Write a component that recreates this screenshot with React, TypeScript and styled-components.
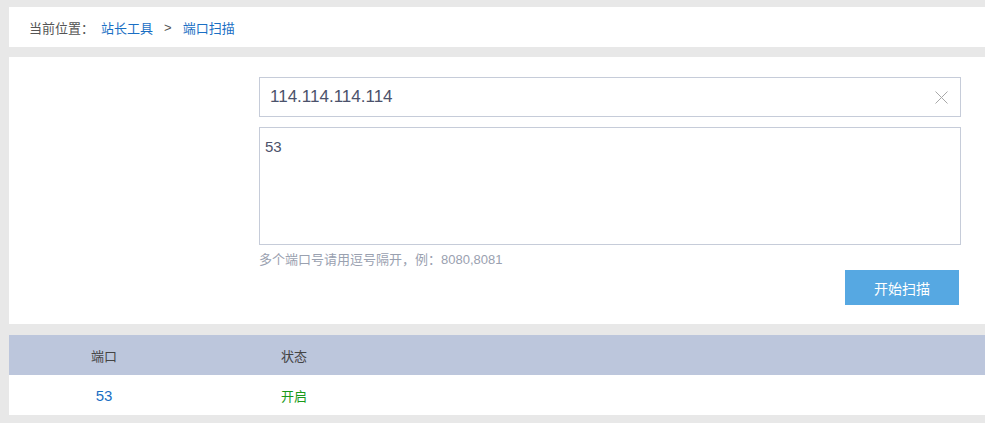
import React from 'react';
import styled, { createGlobalStyle } from 'styled-components';

const GlobalStyle = createGlobalStyle`
  html, body {
    margin: 0;
    padding: 0;
    background-color: #e8e8e8;
    font-family: "Liberation Sans", "Noto Sans CJK SC", Arial, sans-serif;
  }
`;

const Page = styled.div`
  padding: 7px 0 0 9px;
  display: flex;
  flex-direction: column;
  gap: 10px;
`;

const Breadcrumb = styled.div`
  height: 40px;
  background-color: #fff;
  display: flex;
  align-items: center;
  padding-left: 20px;
  font-size: 13px;
  color: #555;
`;

const Crumb = styled.span<{ $gap?: number }>`
  margin-right: ${(p) => p.$gap ?? 0}px;
`;

const Sep = styled.span`
  margin: 0 11px;
`;

const CrumbLink = styled.a`
  color: #1a6fc4;
  text-decoration: none;
`;

const Panel = styled.div`
  background-color: #fff;
  height: 267px;
  box-sizing: border-box;
  padding: 20px 24px 0 250px;
  display: flex;
  flex-direction: column;
`;

const InputBox = styled.div`
  height: 40px;
  box-sizing: border-box;
  border: 1px solid #c6ccd9;
  display: flex;
  align-items: center;
  padding: 0 12px 0 10px;
  font-size: 17px;
  color: #4b526b;
`;

const InputText = styled.span`
  flex: 1;
`;

const TextArea = styled.div`
  margin-top: 10px;
  height: 118px;
  box-sizing: border-box;
  border: 1px solid #c6ccd9;
  padding: 10px 5px;
  font-size: 15px;
  color: #4b526b;
`;

const Hint = styled.div`
  margin-top: 4px;
  font-size: 13px;
  color: #9aa1b0;
`;

const Actions = styled.div`
  display: flex;
  justify-content: flex-end;
  margin-top: 2px;
  padding-right: 2px;
`;

const Button = styled.button`
  width: 114px;
  height: 35px;
  border: none;
  background-color: #56a8e2;
  color: #fff;
  font-size: 14px;
  font-family: inherit;
  cursor: pointer;
`;

const Table = styled.div`
  margin-top: 1px;
  display: flex;
  flex-direction: column;
`;

const Row = styled.div<{ $head?: boolean }>`
  height: 40px;
  display: grid;
  grid-template-columns: 190px 190px 1fr;
  align-items: center;
  background-color: ${(p) => (p.$head ? '#bcc6dc' : '#fff')};
  font-size: 13px;
  color: #444;
`;

const Cell = styled.div<{ $color?: string; $size?: number }>`
  text-align: center;
  color: ${(p) => p.$color ?? 'inherit'};
  font-size: ${(p) => p.$size ?? 13}px;
`;

const ClearIcon = () => (
  <svg width="13" height="13" viewBox="0 0 13 13">
    <path d="M0.5 0.5 L12.5 12.5 M12.5 0.5 L0.5 12.5" stroke="#a8a8a8" strokeWidth="1" fill="none" />
  </svg>
);

const App: React.FC = () => {
  return (
    <>
      <GlobalStyle />
      <Page>
        <Breadcrumb>
          <Crumb $gap={7}>当前位置：</Crumb>
          <CrumbLink href="#">站长工具</CrumbLink>
          <Sep>&gt;</Sep>
          <CrumbLink href="#">端口扫描</CrumbLink>
        </Breadcrumb>
        <Panel>
          <InputBox>
            <InputText>114.114.114.114</InputText>
            <ClearIcon />
          </InputBox>
          <TextArea>53</TextArea>
          <Hint>多个端口号请用逗号隔开，例：8080,8081</Hint>
          <Actions>
            <Button>开始扫描</Button>
          </Actions>
        </Panel>
        <Table>
          <Row $head>
            <Cell>端口</Cell>
            <Cell>状态</Cell>
          </Row>
          <Row>
            <Cell $color="#1a6fc4" $size={15}>53</Cell>
            <Cell $color="#1a9a1a">开启</Cell>
          </Row>
        </Table>
      </Page>
    </>
  );
};

export default App;
